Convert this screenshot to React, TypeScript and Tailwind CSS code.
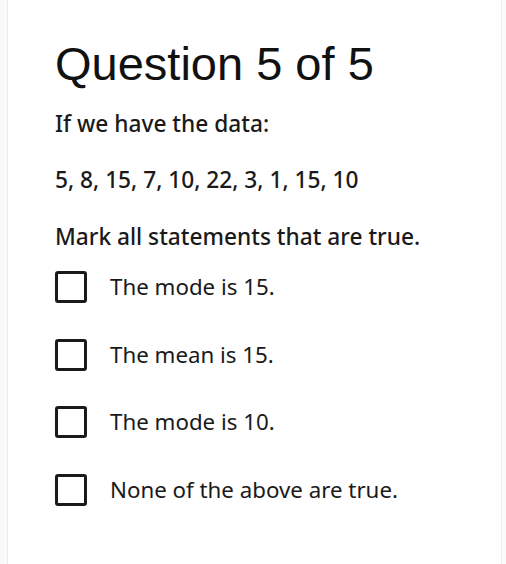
import React from "react";

const options = [
  "The mode is 15.",
  "The mean is 15.",
  "The mode is 10.",
  "None of the above are true.",
];

export default function App() {
  return (
    <div className="min-h-[564px] w-full bg-[#fafafa] pl-[7px] pr-[4px]">
      <div className="min-h-[564px] border-x border-[#ececec] bg-white pl-[47px] pt-[36px]">
        <h1
          className="text-[47px] leading-[56px] text-[#111]"
          style={{ fontFamily: '"Liberation Sans", Arial, sans-serif' }}
        >
          Question 5 of 5
        </h1>
        <div
          className="text-[#1a1a1a]"
          style={{ fontFamily: '"Noto Sans", "Open Sans", sans-serif' }}
        >
          <p className="mt-[17px] text-[22.7px] font-medium leading-[30px]">If we have the data:</p>
          <p className="mt-[26px] text-[22.7px] font-medium leading-[30px]">5, 8, 15, 7, 10, 22, 3, 1, 15, 10</p>
          <p className="mt-[27px] text-[22.7px] font-medium leading-[30px]">Mark all statements that are true.</p>
          <div className="mt-[19px] flex flex-col gap-[35.7px]">
            {options.map((o) => (
              <label key={o} className="flex items-center gap-[23px]">
                <span className="block h-[32px] w-[32px] rounded-[3px] border-[3px] border-[#1a1a1a]" />
                <span className="text-[22.3px] leading-[30px] text-[#1a1a1a]">{o}</span>
              </label>
            ))}
          </div>
        </div>
      </div>
    </div>
  );
}
